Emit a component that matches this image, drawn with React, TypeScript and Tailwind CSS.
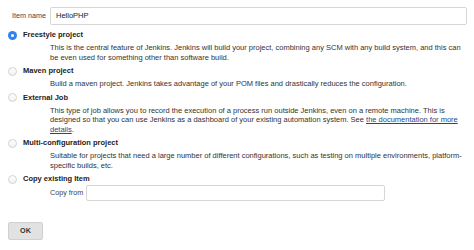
const options = [
  {
    title: "Freestyle project",
    checked: true,
    desc: (
      <>
        This is the central feature of Jenkins. Jenkins will build your project,
        combining any SCM with any build system, and this can be even used for
        something other than software build.
      </>
    ),
  },
  {
    title: "Maven project",
    desc: (
      <>
        Build a maven project. Jenkins takes advantage of your POM files and
        drastically reduces the configuration.
      </>
    ),
  },
  {
    title: "External Job",
    desc: (
      <>
        This type of job allows you to record the execution of a process run
        outside Jenkins, even on a remote machine. This is designed so that you
        can use Jenkins as a dashboard of your existing automation system. See{" "}
        <a href="#" className="text-[#204a87] underline">
          the documentation for more details
        </a>
        .
      </>
    ),
  },
  {
    title: "Multi-configuration project",
    desc: (
      <>
        Suitable for projects that need a large number of different
        configurations, such as testing on multiple environments,
        platform-specific builds, etc.
      </>
    ),
  },
];

const Radio = ({ checked }: { checked?: boolean }) =>
  checked ? (
    <span className="flex h-[9px] w-[9px] shrink-0 items-center justify-center rounded-full bg-[#2f84ee]">
      <span className="h-[3px] w-[3px] rounded-full bg-white" />
    </span>
  ) : (
    <span className="h-[9px] w-[9px] shrink-0 rounded-full border border-[#d2d2d2] bg-gradient-to-b from-white to-[#f2f2f2]" />
  );

const App = () => {
  return (
    <div className="h-[250px] w-[474px] bg-white pl-2 pt-[7px] font-['Liberation_Sans',Arial,sans-serif] text-[#333]">
      <div className="flex items-center">
        <div className="w-[42px] pr-[4px] text-right text-[7.2px] text-[#444]">
          Item name
        </div>
        <div className="flex h-[18px] w-[417px] items-center rounded-[2px] border border-[#d6d6d6] px-[5px] text-[7.5px] text-[#222]">
          HelloPHP
        </div>
      </div>

      <div className="mt-[4px]">
        {options.map((o) => (
          <div key={o.title} className="mb-[3px]">
            <div className="flex h-[12px] items-center gap-[6px]">
              <Radio checked={o.checked} />
              <span className="text-[7.5px] font-bold text-[#222]">{o.title}</span>
            </div>
            <p className="mt-[2px] w-[459px] pl-[42px] text-[7.5px] leading-[9.5px]">
              {o.desc}
            </p>
          </div>
        ))}

        <div className="flex h-[12px] items-center gap-[6px]">
          <Radio />
          <span className="text-[7.5px] font-bold text-[#222]">Copy existing Item</span>
        </div>
        <div className="flex items-center pl-[42px]">
          <span className="mr-[3px] text-[7.2px] text-[#444]">Copy from</span>
          <div className="h-[16px] w-[299px] rounded-[2px] border border-[#d6d6d6]" />
        </div>
      </div>

      <button className="mt-[21px] h-[18px] w-[35px] rounded-[2px] border border-[#d0d0d0] bg-[#e2e2e2] text-[7.2px] font-bold text-[#333]">
        OK
      </button>
    </div>
  );
};

export default App;
